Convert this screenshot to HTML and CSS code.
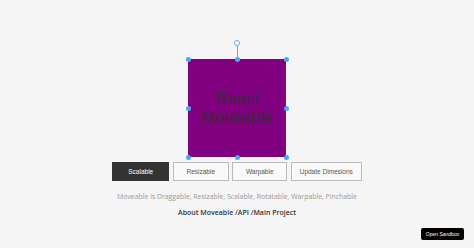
FILE: index.html
```html
<!DOCTYPE html>
<html>
<head>
<meta charset="utf-8">
<link rel="stylesheet" href="styles.css">
</head>
<body>
<div class="page">
  <div class="stage">
    <div class="target">React<br>Moveable</div>
    <div class="rot-line"></div>
    <div class="rot-handle"></div>
    <div class="dot nw"></div><div class="dot n"></div><div class="dot ne"></div>
    <div class="dot w"></div><div class="dot e"></div>
    <div class="dot sw"></div><div class="dot s"></div><div class="dot se"></div>
  </div>
  <div class="buttons">
    <button class="btn active w57">Scalable</button>
    <button class="btn w56">Resizable</button>
    <button class="btn w55">Warpable</button>
    <button class="btn w71">Update Dimesions</button>
  </div>
  <p class="desc">Moveable is Draggable, Resizable, Scalable, Rotatable, Warpable, Pinchable</p>
  <p class="links"><a>About Moveable</a> /<a>API</a> /<a>Main Project</a></p>
</div>
<a class="sandbox">Open Sandbox</a>
</body>
</html>
```
FILE: styles.css
```css
html, body {
  margin: 0;
  padding: 0;
  background: #f5f5f5;
  width: 474px;
  height: 248px;
  overflow: hidden;
}
.page {
  display: flex;
  flex-direction: column;
  align-items: center;
  padding-top: 59px;
}
.stage {
  position: relative;
  width: 98px;
  height: 98px;
}
.target {
  width: 98px;
  height: 98px;
  background: #800080;
  color: #3a2a3a;
  font-family: "Liberation Sans", Arial, sans-serif;
  font-size: 16.5px;
  line-height: 18.5px;
  text-align: center;
  box-sizing: border-box;
  padding-top: 30px;
}
.rot-line {
  position: absolute;
  left: 48.5px;
  top: -13px;
  width: 1px;
  height: 13px;
  background: #5ab0f5;
}
.rot-handle {
  position: absolute;
  left: 46px;
  top: -19px;
  width: 4px;
  height: 4px;
  border: 1px solid #5ab0f5;
  border-radius: 50%;
  background: #fff;
}
.dot {
  position: absolute;
  width: 5px;
  height: 5px;
  border-radius: 50%;
  background: #4aa8f0;
  margin-left: -2.5px;
  margin-top: -2.5px;
}
.nw { left: 0; top: 0; }
.n { left: 49px; top: 0; }
.ne { left: 98px; top: 0; }
.w { left: 0; top: 49px; }
.e { left: 98px; top: 49px; }
.sw { left: 0; top: 98px; }
.s { left: 49px; top: 98px; }
.se { left: 98px; top: 98px; }
.buttons {
  display: flex;
  gap: 3.5px;
  margin-top: 5px;
}
.btn {
  height: 19px;
  padding: 0;
  border: 1px solid #bbb;
  background: #f9f9f9;
  color: #555;
  font-family: "Liberation Sans", Arial, sans-serif;
  font-size: 6.5px;
}
.btn.active {
  background: #333;
  border-color: #333;
  color: #fff;
}
.w57 { width: 57px; }
.w56 { width: 56px; }
.w55 { width: 55px; }
.w71 { width: 71px; }
.desc {
  margin: 10px 0 0;
  font-family: "Open Sans", sans-serif;
  font-size: 6.9px;
  color: #999;
  line-height: 12px;
}
.links {
  margin: 3.5px 0 0;
  font-family: "Open Sans", sans-serif;
  font-size: 7px;
  font-weight: 600;
  color: #333;
  line-height: 12px;
}
.links a { color: #333; }
.sandbox {
  position: fixed;
  right: 10px;
  bottom: 8px;
  width: 43px;
  height: 12px;
  background: #000;
  color: #fff;
  border-radius: 2px;
  font-family: "Liberation Sans", Arial, sans-serif;
  font-size: 5px;
  line-height: 12px;
  text-align: center;
}
```
